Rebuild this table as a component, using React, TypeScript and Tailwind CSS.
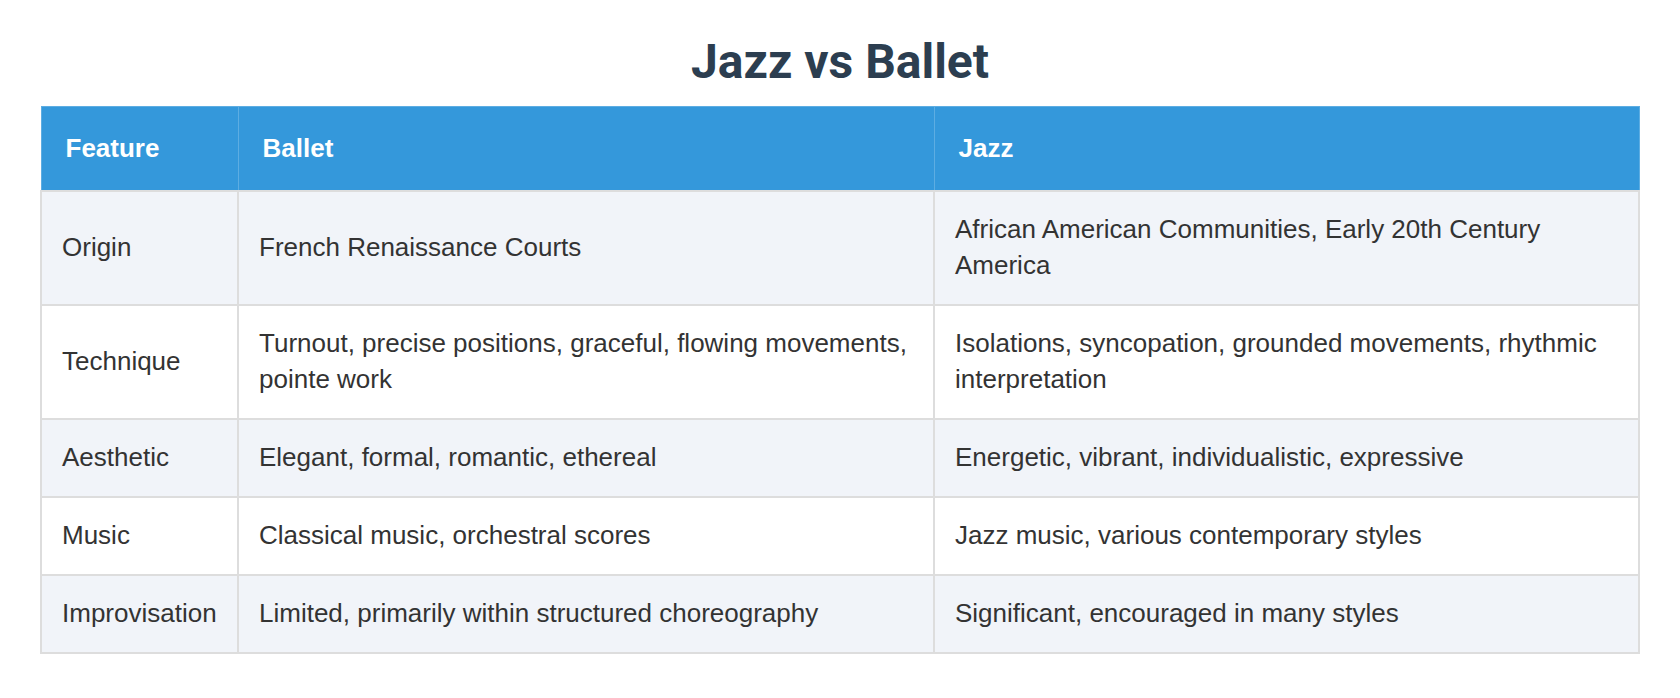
const rows = [
  {
    feature: "Origin",
    ballet: "French Renaissance Courts",
    jazz: "African American Communities, Early 20th Century America",
  },
  {
    feature: "Technique",
    ballet: "Turnout, precise positions, graceful, flowing movements, pointe work",
    jazz: "Isolations, syncopation, grounded movements, rhythmic interpretation",
  },
  {
    feature: "Aesthetic",
    ballet: "Elegant, formal, romantic, ethereal",
    jazz: "Energetic, vibrant, individualistic, expressive",
  },
  {
    feature: "Music",
    ballet: "Classical music, orchestral scores",
    jazz: "Jazz music, various contemporary styles",
  },
  {
    feature: "Improvisation",
    ballet: "Limited, primarily within structured choreography",
    jazz: "Significant, encouraged in many styles",
  },
];

export default function App() {
  return (
    <div className="min-h-screen bg-white px-10 pt-[33px] pb-10 font-['Liberation_Sans',Arial,sans-serif] text-[#333333]">
      <h1 className="mb-[15px] text-center font-['Roboto',sans-serif] text-[48px] leading-[1.2] font-bold text-[#2c3e50]">
        Jazz vs Ballet
      </h1>

      <table className="w-full table-fixed border-collapse text-left text-[26px] leading-[1.38]">
        <colgroup>
          <col className="w-[197px]" />
          <col className="w-[696px]" />
          <col />
        </colgroup>
        <thead>
          <tr className="bg-[#3498db] text-white">
            <th className="border border-[#5dade2] px-6 py-6 font-bold">Feature</th>
            <th className="border border-[#5dade2] px-6 py-6 font-bold">Ballet</th>
            <th className="border border-[#5dade2] px-6 py-6 font-bold">Jazz</th>
          </tr>
        </thead>
        <tbody>
          {rows.map((r, i) => (
            <tr key={r.feature} className={i % 2 === 0 ? "bg-[#f1f4f9]" : "bg-white"}>
              <td className="border-2 border-[#dddddd] px-5 py-5">{r.feature}</td>
              <td className="border-2 border-[#dddddd] px-5 py-5">{r.ballet}</td>
              <td className="border-2 border-[#dddddd] px-5 py-5">{r.jazz}</td>
            </tr>
          ))}
        </tbody>
      </table>
    </div>
  );
}
